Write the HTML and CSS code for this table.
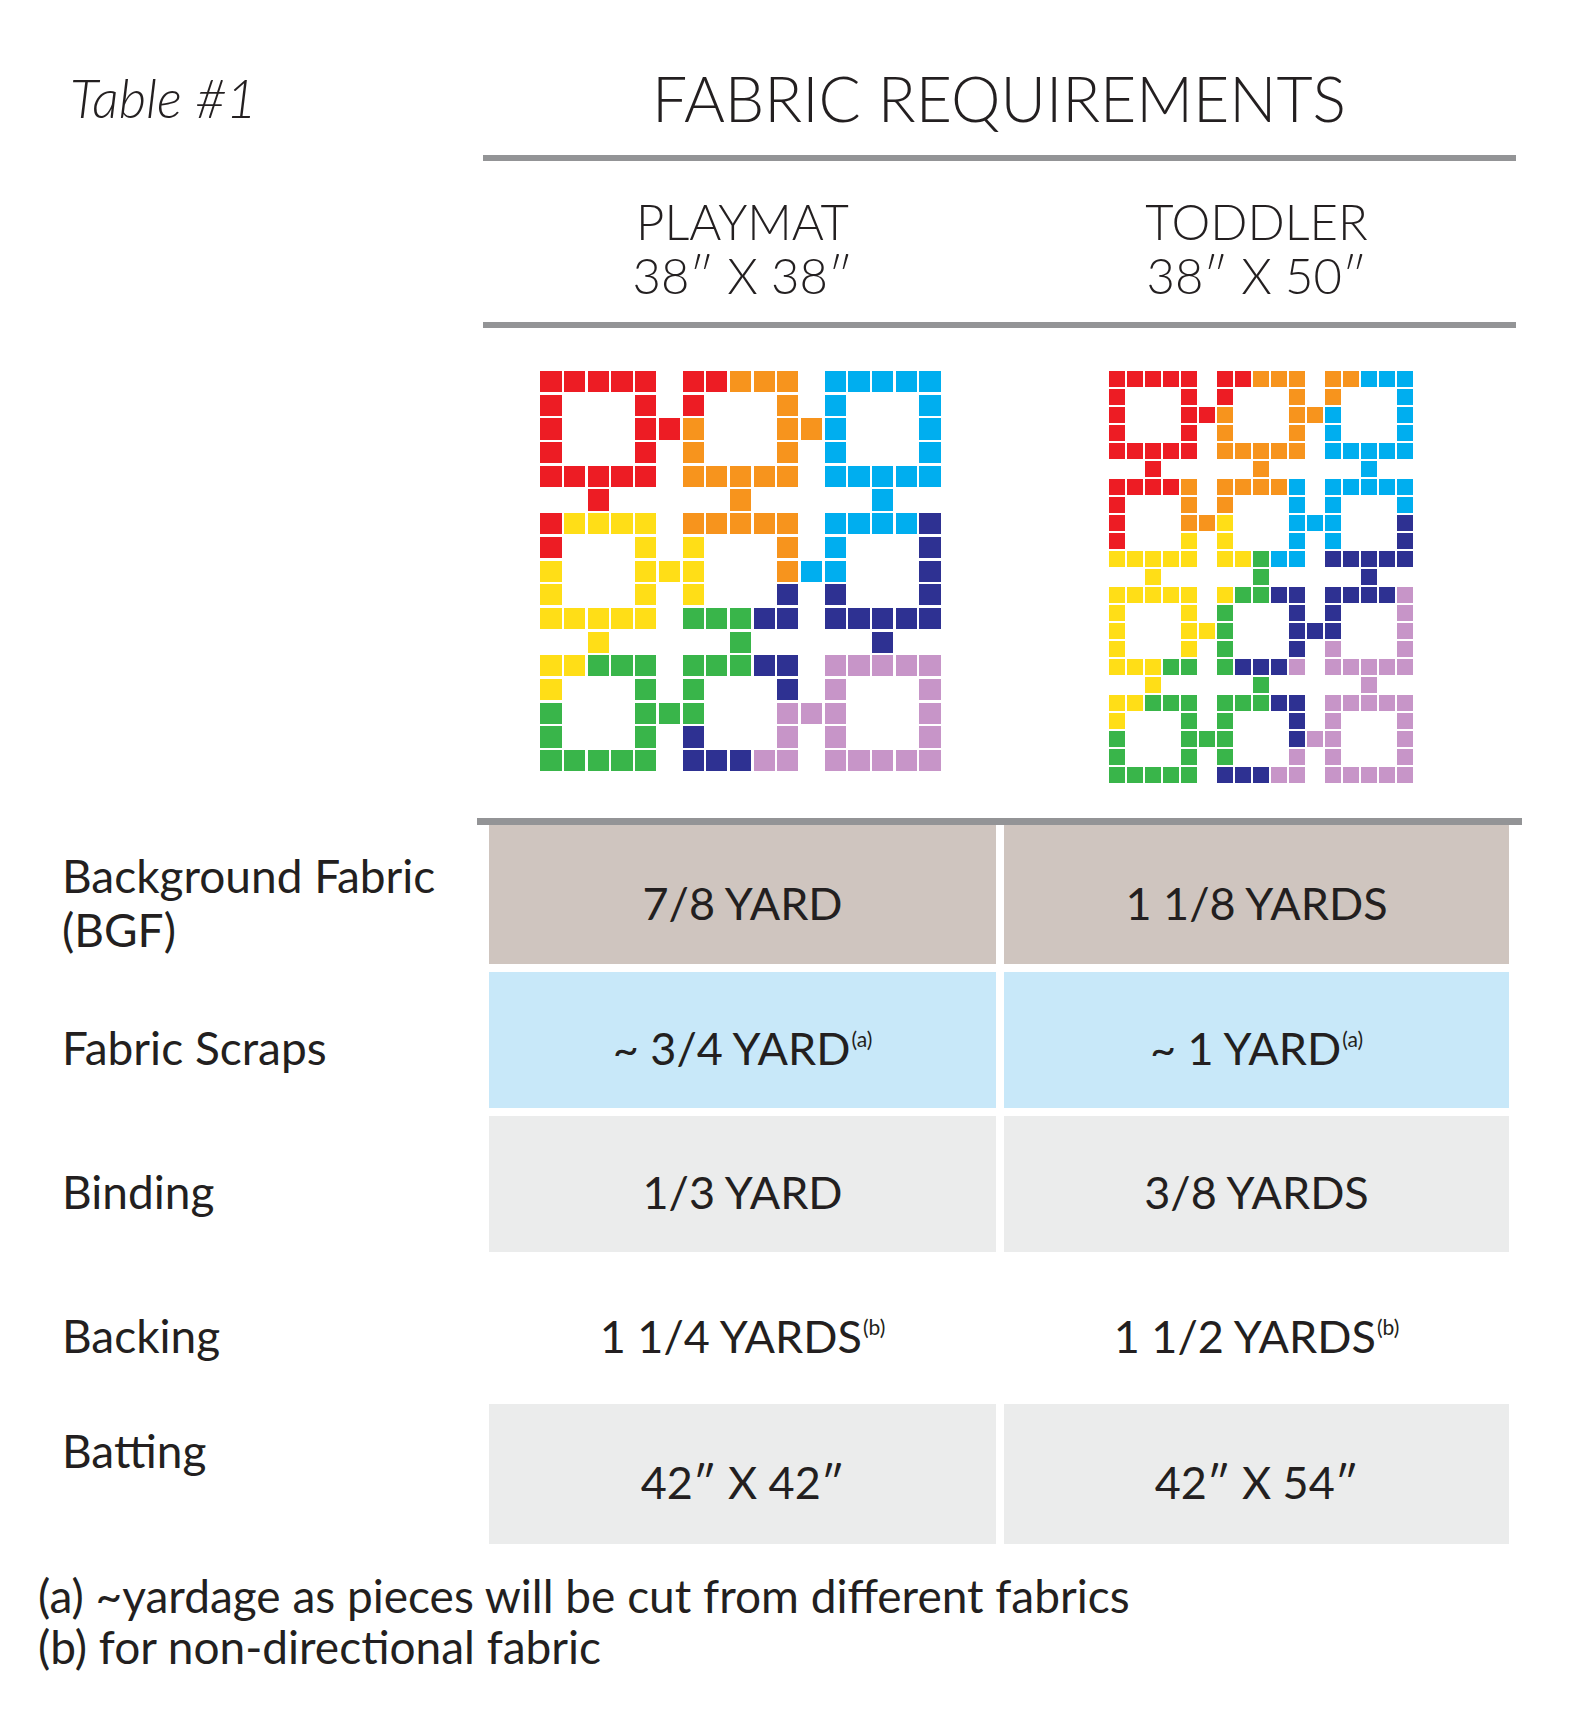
FILE: index.html
```html
<!DOCTYPE html>
<html lang="en">
<head>
<meta charset="utf-8">
<title>Fabric Requirements</title>
<link rel="stylesheet" href="styles.css">
</head>
<body>
<main class="sheet">
  <section class="head">
    <p class="table-no">Table #1</p>
    <h1 class="title">FABRIC REQUIREMENTS</h1>
    <div class="rule rule-a"></div>
    <div class="size size-1"><span>PLAYMAT</span><span>38″ X 38″</span></div>
    <div class="size size-2"><span>TODDLER</span><span>38″ X 50″</span></div>
    <div class="rule rule-b"></div>
    <div class="quilt-cell q-1">
      <div class="quilt quilt-playmat" data-pattern="RRRRR.RROOO.BBBBB R...R.R...O.B...B R...RRO...OOB...B R...R.O...O.B...B RRRRR.OOOOO.BBBBB ..R.....O.....B.. RYYYY.OOOOO.BBBBN R...Y.Y...O.B...N Y...YYY...OBB...N Y...Y.Y...N.N...N YYYYY.GGGNN.NNNNN ..Y.....G.....N.. YYGGG.GGGNN.PPPPP Y...G.G...N.P...P G...GGG...PPP...P G...G.N...P.P...P GGGGG.NNNPP.PPPPP"></div>
    </div>
    <div class="quilt-cell q-2">
      <div class="quilt quilt-toddler" data-pattern="RRRRR.RROOO.OOBBB R...R.R...O.O...B R...RRO...OOB...B R...R.O...O.B...B RRRRR.OOOOO.BBBBB ..R.....O.....B.. RRRRO.OOOOB.BBBBB R...O.O...B.B...B R...OOY...BBB...N R...Y.Y...B.B...N YYYYY.YYGBB.NNNNN ..Y.....G.....N.. YYYYY.YGGNN.NNNNP Y...Y.G...N.N...P Y...YYG...NNN...P Y...Y.G...N.P...P YYYGG.GNNNP.PPPPP ..Y.....G.....P.. YYGGG.GGGNN.PPPPP Y...G.G...N.P...P G...GGG...NPP...P G...G.G...P.P...P GGGGG.NNNPP.PPPPP"></div>
    </div>
    <div class="rule rule-c"></div>
  </section>

  <section class="reqs">
    <div class="label"><span>Background Fabric<br>(BGF)</span></div>
    <div class="val tan"><span>7/8 YARD</span></div>
    <div class="val tan"><span>1 1/8 YARDS</span></div>

    <div class="label"><span>Fabric Scraps</span></div>
    <div class="val sky"><span>~ 3/4 YARD<sup class="fn">(a)</sup></span></div>
    <div class="val sky"><span>~ 1 YARD<sup class="fn">(a)</sup></span></div>

    <div class="label"><span>Binding</span></div>
    <div class="val grey"><span>1/3 YARD</span></div>
    <div class="val grey"><span>3/8 YARDS</span></div>

    <div class="label"><span>Backing</span></div>
    <div class="val"><span>1 1/4 YARDS<sup class="fn">(b)</sup></span></div>
    <div class="val"><span>1 1/2 YARDS<sup class="fn">(b)</sup></span></div>

    <div class="label top"><span>Batting</span></div>
    <div class="val grey"><span>42″ X 42″</span></div>
    <div class="val grey"><span>42″ X 54″</span></div>
  </section>

  <section class="notes">
    <p>(a) ~yardage as pieces will be cut from different fabrics</p>
    <p>(b) for non-directional fabric</p>
  </section>
</main>
<script src="script.js"></script>
</body>
</html>
```

FILE: styles.css
```css
html, body {
  margin: 0;
  padding: 0;
  background: #ffffff;
}

body {
  color: #231f20;
  font-family: Lato, "Open Sans", "DejaVu Sans", sans-serif;
}

.sheet {
  width: 1588px;
}

/* ---------- header ---------- */
.head {
  display: grid;
  grid-template-columns: 419px 507px 505px;
  column-gap: 8px;
  padding: 67px 0 0 62px;
}

.table-no {
  grid-column: 1;
  grid-row: 1;
  margin: 0 0 0 8px;
  font-style: italic;
  font-weight: 300;
  font-size: 53px;
  line-height: 61px;
  color: #231f20;
}

.title {
  grid-column: 2 / 4;
  grid-row: 1;
  margin: 0;
  text-align: center;
  font-weight: 300;
  font-size: 62.5px;
  line-height: 61px;
}

.rule {
  grid-column: 2 / 4;
  height: 6px;
  background: #939496;
  margin: 0 -7px 0 -6px;
}

.rule-a { grid-row: 2; margin-top: 27px; }
.rule-b { grid-row: 4; margin-top: 20px; }
.rule-c { grid-row: 6; margin: 35px -13px 0 -12px; height: 7px; }

.size {
  grid-row: 3;
  display: flex;
  flex-direction: column;
  align-items: center;
  margin-top: 33px;
  font-weight: 300;
  font-size: 49px;
  line-height: 54px;
}

.size-1 { grid-column: 2; }
.size-2 { grid-column: 3; }

.quilt-cell {
  grid-row: 5;
  display: flex;
  justify-content: center;
  align-items: flex-start;
  margin-top: 43px;
}

.q-1 { grid-column: 2; padding-right: 4px; }
.q-2 { grid-column: 3; padding-left: 8px; }

.quilt {
  display: grid;
}

.quilt-playmat {
  grid-template-columns: repeat(17, 21.2px);
  grid-auto-rows: 21.2px;
  gap: 2.5px;
}

.quilt-toddler {
  grid-template-columns: repeat(17, 16px);
  grid-auto-rows: 16px;
  gap: 2px;
}

.px { display: block; }
.c-R { background: #ed1c24; }
.c-O { background: #f7941d; }
.c-B { background: #00aeef; }
.c-Y { background: #ffde17; }
.c-G { background: #39b54a; }
.c-N { background: #2e3192; }
.c-P { background: #c795c8; }

/* ---------- requirements table ---------- */
.reqs {
  display: grid;
  grid-template-columns: 419px 507px 505px;
  grid-template-rows: 139px 136px 136px 136px 140px;
  column-gap: 8px;
  row-gap: 8px;
  padding-left: 62px;
  font-size: 45px;
  line-height: 54px;
}

.label {
  display: flex;
  align-items: center;
  padding-top: 16px;
  box-sizing: border-box;
  font-size: 46px;
}

.label.top {
  align-items: flex-start;
  padding-top: 20px;
}

.val {
  display: flex;
  align-items: center;
  justify-content: center;
  padding-top: 16px;
  box-sizing: border-box;
  white-space: nowrap;
}

.tan { background: #cfc5bf; }
.sky { background: #c8e8f9; }
.grey { background: #ebecec; }

.fn {
  font-size: 21px;
  line-height: 0;
  vertical-align: 18px;
  margin-left: 1px;
}

/* ---------- footnotes ---------- */
.notes {
  margin-top: 26px;
  padding-left: 38px;
  font-size: 46px;
  line-height: 51px;
}

.notes p {
  margin: 0;
}
```

FILE: script.js
```js
document.querySelectorAll('.quilt').forEach(function (quilt) {
  var rows = quilt.dataset.pattern.trim().split(/\s+/);
  rows.forEach(function (row) {
    row.split('').forEach(function (ch) {
      var cell = document.createElement('span');
      cell.className = ch === '.' ? 'px' : 'px c-' + ch;
      quilt.appendChild(cell);
    });
  });
});
```
